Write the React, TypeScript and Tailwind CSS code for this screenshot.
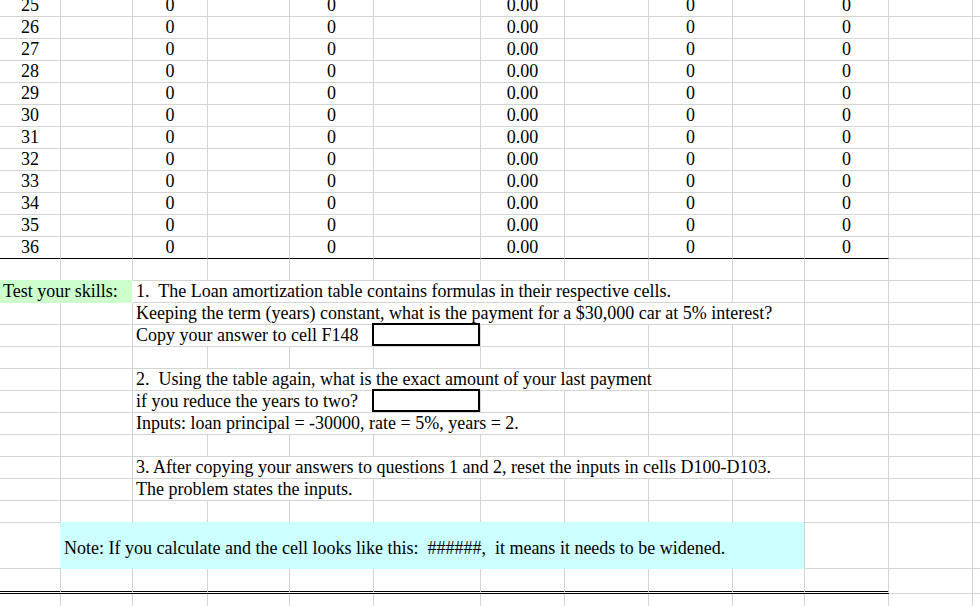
import clsx from "clsx"

// Column widths of the sheet (A..M), each including its 1px right gridline
const GRID = "grid grid-cols-[61px_72px_75px_82px_84px_107px_84px_84px_84px_72px_84px_84px_84px]"

const SPAN: Record<number, string> = {
    1: "col-span-1",
    2: "col-span-2",
    3: "col-span-3",
    5: "col-span-5",
    7: "col-span-7",
    8: "col-span-8",
    9: "col-span-9",
}

type CellProps = {
    span?: number
    text?: string
    center?: boolean
    box?: boolean
    className?: string
    bottom?: string
}

function Cell({ span = 1, text, center, box, className, bottom = "border-b border-b-[#d4d4d4]" }: CellProps) {
    return (
        <div
            className={clsx(
                SPAN[span],
                "relative border-r border-r-[#d4d4d4] leading-[21px] whitespace-pre",
                center ? "text-center" : "pl-[3px]",
                bottom,
                className,
            )}
        >
            {box && <div className="absolute -left-[2px] -top-[2px] right-0 bottom-0 border-2 border-black" />}
            {text}
        </div>
    )
}

// Trailing blank cells to fill a row out to column M
function Blanks({ n }: { n: number }) {
    return (
        <>
            {Array.from({ length: n }, (_, i) => (
                <Cell key={i} />
            ))}
        </>
    )
}

function Row({ children, className = "h-[22px]" }: { children: React.ReactNode; className?: string }) {
    return <div className={clsx(GRID, className)}>{children}</div>
}

const periods = [25, 26, 27, 28, 29, 30, 31, 32, 33, 34, 35, 36]

function TextRow({ span, text, box }: { span: number; text: string; box?: boolean }) {
    // text overflows across `span` columns starting at C
    const used = 2 + span + (box ? 1 : 0)
    return (
        <Row>
            <Cell />
            <Cell />
            <Cell span={span} text={text} />
            {box && <Cell box />}
            <Blanks n={13 - used} />
        </Row>
    )
}

function EmptyRow() {
    return (
        <Row>
            <Blanks n={13} />
        </Row>
    )
}

export default function App() {
    return (
        <div className="h-[606px] w-[980px] overflow-hidden bg-white font-serif text-[18px] text-black">
            <div className="-mt-[5px] font-[Liberation_Serif,Times_New_Roman,serif]">
                {/* Amortization rows */}
                {periods.map((p) => {
                    const last = p === 36
                    const b = last ? "border-b border-b-black" : undefined
                    return (
                        <Row key={p}>
                            <Cell center text={String(p)} bottom={b} />
                            <Cell bottom={b} />
                            <Cell center text="0" bottom={b} />
                            <Cell bottom={b} />
                            <Cell center text="0" bottom={b} />
                            <Cell bottom={b} />
                            <Cell center text="0.00" bottom={b} />
                            <Cell bottom={b} />
                            <Cell center text="0" bottom={b} />
                            <Cell bottom={b} />
                            <Cell center text="0" bottom={b} />
                            <Cell />
                            <Cell />
                        </Row>
                    )
                })}

                <EmptyRow />

                {/* Exercises */}
                <Row>
                    <Cell
                        span={2}
                        text="Test your skills:"
                        className="bg-[#ccffcc] border-r-white shadow-[0_-1px_0_0_#ccffcc]"
                        bottom="border-b border-b-[#ccffcc]"
                    />
                    <Cell span={7} text="1.  The Loan amortization table contains formulas in their respective cells." />
                    <Blanks n={4} />
                </Row>
                <TextRow span={8} text="Keeping the term (years) constant, what is the payment for a $30,000 car at 5% interest?" />
                <TextRow span={3} text="Copy your answer to cell F148" box />
                <EmptyRow />
                <TextRow span={7} text="2.  Using the table again, what is the exact amount of your last payment" />
                <TextRow span={3} text="if you reduce the years to two?" box />
                <TextRow span={5} text="Inputs: loan principal = -30000, rate = 5%, years = 2." />
                <EmptyRow />
                <TextRow span={8} text="3. After copying your answers to questions 1 and 2, reset the inputs in cells D100-D103." />
                <TextRow span={3} text="The problem states the inputs." />
                <EmptyRow />

                {/* Note banner */}
                <Row className="h-[46px]">
                    <Cell />
                    <Cell
                        span={9}
                        text="Note: If you calculate and the cell looks like this:  ######,  it means it needs to be widened."
                        className="bg-[#ccffff] border-r-[#ccffff] pt-[15px] shadow-[-1px_-1px_0_0_#ccffff]"
                        bottom="border-b border-b-[#ccffff]"
                    />
                    <Blanks n={3} />
                </Row>

                {/* Closing double rule */}
                <Row className="h-[25px]">
                    {Array.from({ length: 11 }, (_, i) => (
                        <Cell key={i} bottom="border-b-[3px] border-double border-b-black" />
                    ))}
                    <Cell />
                    <Cell />
                </Row>
                <EmptyRow />
            </div>
        </div>
    )
}
